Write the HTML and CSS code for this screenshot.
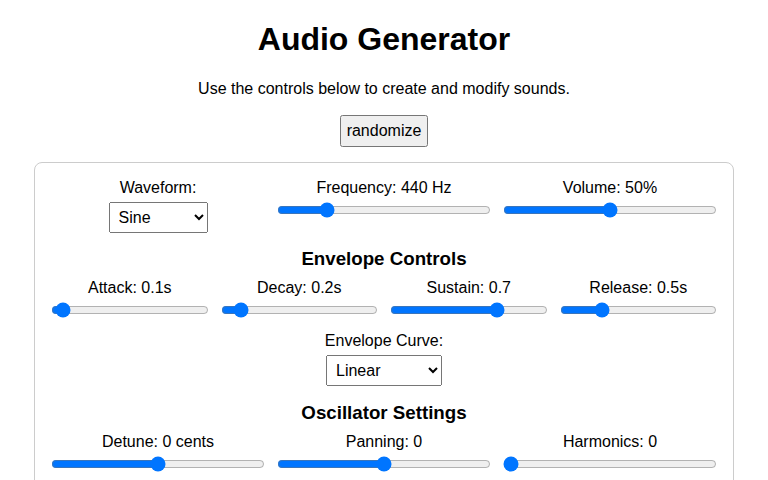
FILE: index.html
```html
<!DOCTYPE html>
<html lang="en">
<head>
<meta charset="utf-8">
<title>Audio Generator</title>
<link rel="stylesheet" href="styles.css">
</head>
<body>
<h1 class="title">Audio Generator</h1>
<p class="intro">Use the controls below to create and modify sounds.</p>
<div class="actions"><button class="btn" type="button">randomize</button></div>
<div class="panel">
  <div class="row">
    <div class="control">
      <label class="lbl">Waveform:</label>
      <select class="sel">
        <option>Sine</option>
        <option>Square</option>
        <option>Sawtooth</option>
        <option>Triangle</option>
      </select>
    </div>
    <div class="control">
      <label class="lbl">Frequency: 440 Hz</label>
      <input class="rng" type="range" min="20" max="2000" value="440">
    </div>
    <div class="control">
      <label class="lbl">Volume: 50%</label>
      <input class="rng" type="range" min="0" max="100" value="50">
    </div>
  </div>
  <h3 class="section">Envelope Controls</h3>
  <div class="row">
    <div class="control">
      <label class="lbl">Attack: 0.1s</label>
      <input class="rng" type="range" min="0.01" max="3" step="0.01" value="0.1">
    </div>
    <div class="control">
      <label class="lbl">Decay: 0.2s</label>
      <input class="rng" type="range" min="0.01" max="2.2" step="0.01" value="0.2">
    </div>
    <div class="control">
      <label class="lbl">Sustain: 0.7</label>
      <input class="rng" type="range" min="0" max="1" step="0.01" value="0.7">
    </div>
    <div class="control">
      <label class="lbl">Release: 0.5s</label>
      <input class="rng" type="range" min="0.01" max="2" step="0.01" value="0.5">
    </div>
  </div>
  <div class="row single">
    <div class="control">
      <label class="lbl">Envelope Curve:</label>
      <select class="sel">
        <option>Linear</option>
        <option>Exponential</option>
      </select>
    </div>
  </div>
  <h3 class="section section-osc">Oscillator Settings</h3>
  <div class="row">
    <div class="control">
      <label class="lbl">Detune: 0 cents</label>
      <input class="rng" type="range" min="-100" max="100" value="0">
    </div>
    <div class="control">
      <label class="lbl">Panning: 0</label>
      <input class="rng" type="range" min="-1" max="1" step="0.01" value="0">
    </div>
    <div class="control">
      <label class="lbl">Harmonics: 0</label>
      <input class="rng" type="range" min="0" max="10" value="0">
    </div>
  </div>
</div>
</body>
</html>
```

FILE: styles.css
```css
body {
  margin: 0;
  padding: 0 20px;
  font-family: "Liberation Sans", Arial, sans-serif;
  text-align: center;
  color: #000;
  background: #fff;
}
.title {
  font-size: 32px;
  margin: 21px 0 0;
}
.intro {
  font-size: 16px;
  margin: 22px 0 17px;
}
.actions {
  margin: 0;
}
.btn {
  font-family: "Liberation Sans", Arial, sans-serif;
  font-size: 16px;
  padding: 5px;
}
.panel {
  max-width: 700px;
  box-sizing: border-box;
  margin: 15px auto 0;
  border: 1px solid #ccc;
  border-radius: 8px;
  padding: 16px;
}
.row {
  display: flex;
  gap: 12px;
}
.row.single {
  justify-content: center;
  margin-top: 10px;
}
.control {
  flex: 1;
}
.lbl {
  display: block;
  margin-bottom: 5px;
  font-size: 16px;
}
.sel {
  font-family: "Liberation Sans", Arial, sans-serif;
  font-size: 16px;
  padding: 5px;
}
.rng {
  width: 100%;
  margin: 0;
}
.section {
  font-size: 18.72px;
  margin: 15px 0 9px;
}
.section-osc {
  margin-top: 16px;
}
```
